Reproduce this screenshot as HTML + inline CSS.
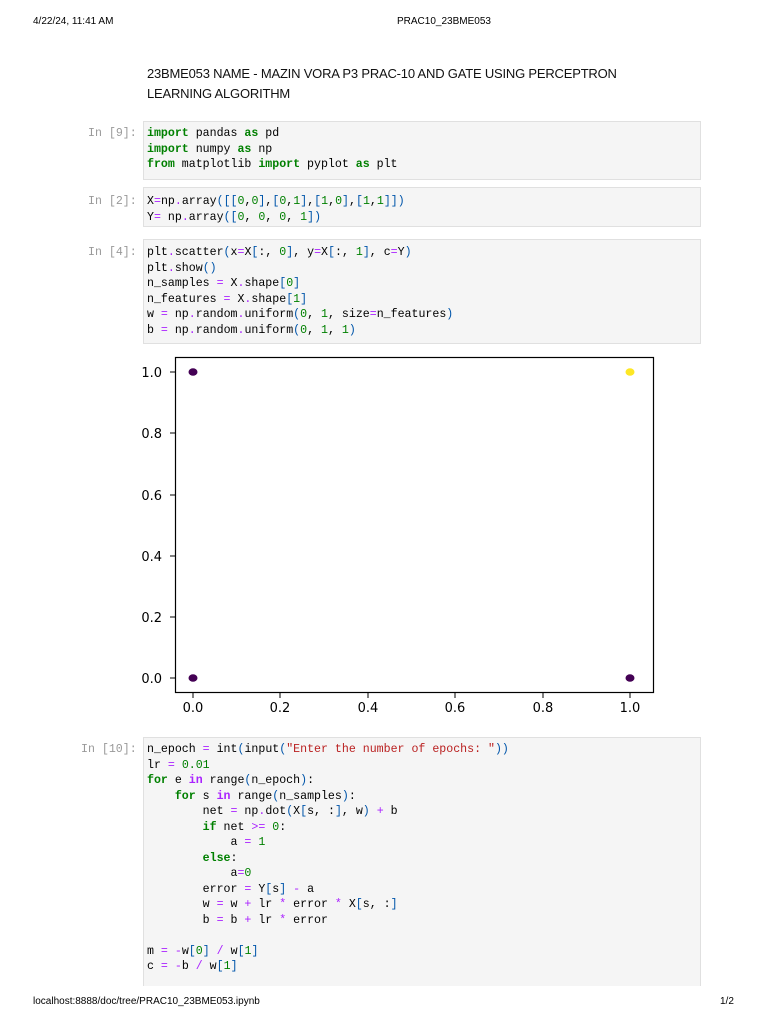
<!DOCTYPE html>
<html style="height:1024px;overflow:hidden"><head><meta charset="utf-8"><style>
html,body{margin:0;width:768px;height:1024px;overflow:hidden;}
body{background:#fff;position:relative;font-family:"Liberation Sans",sans-serif;}
.abs{position:absolute;white-space:pre;}
.hdr{font-size:10px;color:#000;}
.h{font-size:13px;color:#111;letter-spacing:-0.2px;left:147px;}
.box{position:absolute;left:143px;width:556px;background:#f5f5f5;border:1px solid #e0e0e0;}
.code{position:absolute;left:147px;font-family:"Liberation Mono",monospace;font-size:11.6px;line-height:15.5px;white-space:pre;color:#000;}
.p{position:absolute;font-family:"Liberation Mono",monospace;font-size:11.6px;color:#999;white-space:pre;}
.k{color:#008000;font-weight:bold}.o{color:#aa22ff}.n{color:#008000}.b{color:#0055aa}.s{color:#ba2121}
</style></head><body>
<div class="abs hdr" style="left:33px;top:16px">4/22/24, 11:41 AM</div>
<div class="abs hdr" style="left:397px;top:16px">PRAC10_23BME053</div>
<div class="abs h" style="top:66px">23BME053 NAME - MAZIN VORA P3 PRAC-10 AND GATE USING PERCEPTRON</div>
<div class="abs h" style="top:86px">LEARNING ALGORITHM</div>

<div class="box" style="top:121px;height:57px"></div>
<div class="p" style="left:88px;top:127px">In [9]:</div>
<div class="code" style="top:126px"><span class="k">import</span> pandas <span class="k">as</span> pd
<span class="k">import</span> numpy <span class="k">as</span> np
<span class="k">from</span> matplotlib <span class="k">import</span> pyplot <span class="k">as</span> plt</div>

<div class="box" style="top:187px;height:38px"></div>
<div class="p" style="left:88px;top:195px">In [2]:</div>
<div class="code" style="top:194px">X<span class="o">=</span>np<span class="o">.</span>array<span class="b">([[</span><span class="n">0</span>,<span class="n">0</span><span class="b">]</span>,<span class="b">[</span><span class="n">0</span>,<span class="n">1</span><span class="b">]</span>,<span class="b">[</span><span class="n">1</span>,<span class="n">0</span><span class="b">]</span>,<span class="b">[</span><span class="n">1</span>,<span class="n">1</span><span class="b">]])</span>
Y<span class="o">=</span> np<span class="o">.</span>array<span class="b">([</span><span class="n">0</span>, <span class="n">0</span>, <span class="n">0</span>, <span class="n">1</span><span class="b">])</span></div>

<div class="box" style="top:239px;height:103px"></div>
<div class="p" style="left:88px;top:246px">In [4]:</div>
<div class="code" style="top:245px">plt<span class="o">.</span>scatter<span class="b">(</span>x<span class="o">=</span>X<span class="b">[</span>:, <span class="n">0</span><span class="b">]</span>, y<span class="o">=</span>X<span class="b">[</span>:, <span class="n">1</span><span class="b">]</span>, c<span class="o">=</span>Y<span class="b">)</span>
plt<span class="o">.</span>show<span class="b">()</span>
n_samples <span class="o">=</span> X<span class="o">.</span>shape<span class="b">[</span><span class="n">0</span><span class="b">]</span>
n_features <span class="o">=</span> X<span class="o">.</span>shape<span class="b">[</span><span class="n">1</span><span class="b">]</span>
w <span class="o">=</span> np<span class="o">.</span>random<span class="o">.</span>uniform<span class="b">(</span><span class="n">0</span>, <span class="n">1</span>, size<span class="o">=</span>n_features<span class="b">)</span>
b <span class="o">=</span> np<span class="o">.</span>random<span class="o">.</span>uniform<span class="b">(</span><span class="n">0</span>, <span class="n">1</span>, <span class="n">1</span><span class="b">)</span></div>

<svg class="abs" style="left:0;top:0" width="768" height="1024">
<rect x="175.5" y="357.5" width="478" height="335" fill="none" stroke="#000" stroke-width="1.2"/>
<g stroke="#000" stroke-width="1">
<line x1="170" y1="372" x2="175" y2="372"/><line x1="170" y1="433" x2="175" y2="433"/><line x1="170" y1="495" x2="175" y2="495"/><line x1="170" y1="556" x2="175" y2="556"/><line x1="170" y1="617" x2="175" y2="617"/><line x1="170" y1="678" x2="175" y2="678"/>
<line x1="193" y1="693" x2="193" y2="698"/><line x1="280" y1="693" x2="280" y2="698"/><line x1="368" y1="693" x2="368" y2="698"/><line x1="455" y1="693" x2="455" y2="698"/><line x1="543" y1="693" x2="543" y2="698"/><line x1="630" y1="693" x2="630" y2="698"/>
</g>
<g font-family="DejaVu Sans,sans-serif" font-size="13" fill="#000" text-anchor="end">
<text x="162" y="377">1.0</text><text x="162" y="438">0.8</text><text x="162" y="500">0.6</text><text x="162" y="561">0.4</text><text x="162" y="622">0.2</text><text x="162" y="683">0.0</text>
</g>
<g font-family="DejaVu Sans,sans-serif" font-size="13" fill="#000" text-anchor="middle">
<text x="193" y="712">0.0</text><text x="280" y="712">0.2</text><text x="368" y="712">0.4</text><text x="455" y="712">0.6</text><text x="543" y="712">0.8</text><text x="630" y="712">1.0</text>
</g>
<ellipse cx="193" cy="372" rx="4.5" ry="3.8" fill="#440154"/>
<ellipse cx="630" cy="372" rx="4.5" ry="3.8" fill="#fde725"/>
<ellipse cx="193" cy="678" rx="4.5" ry="3.8" fill="#440154"/>
<ellipse cx="630" cy="678" rx="4.5" ry="3.8" fill="#440154"/>
</svg>

<div class="box" style="top:737px;height:260px"></div>
<div class="p" style="left:81px;top:743px">In [10]:</div>
<div class="code" style="top:742px">n_epoch <span class="o">=</span> int<span class="b">(</span>input<span class="b">(</span><span class="s">"Enter the number of epochs: "</span><span class="b">))</span>
lr <span class="o">=</span> <span class="n">0.01</span>
<span class="k">for</span> e <span class="o" style="font-weight:bold">in</span> range<span class="b">(</span>n_epoch<span class="b">)</span>:
    <span class="k">for</span> s <span class="o" style="font-weight:bold">in</span> range<span class="b">(</span>n_samples<span class="b">)</span>:
        net <span class="o">=</span> np<span class="o">.</span>dot<span class="b">(</span>X<span class="b">[</span>s, :<span class="b">]</span>, w<span class="b">)</span> <span class="o">+</span> b
        <span class="k">if</span> net <span class="o">&gt;=</span> <span class="n">0</span>:
            a <span class="o">=</span> <span class="n">1</span>
        <span class="k">else</span>:
            a<span class="o">=</span><span class="n">0</span>
        error <span class="o">=</span> Y<span class="b">[</span>s<span class="b">]</span> <span class="o">-</span> a
        w <span class="o">=</span> w <span class="o">+</span> lr <span class="o">*</span> error <span class="o">*</span> X<span class="b">[</span>s, :<span class="b">]</span>
        b <span class="o">=</span> b <span class="o">+</span> lr <span class="o">*</span> error

m <span class="o">=</span> <span class="o">-</span>w<span class="b">[</span><span class="n">0</span><span class="b">]</span> <span class="o">/</span> w<span class="b">[</span><span class="n">1</span><span class="b">]</span>
c <span class="o">=</span> <span class="o">-</span>b <span class="o">/</span> w<span class="b">[</span><span class="n">1</span><span class="b">]</span></div>

<div class="abs" style="left:0;top:986px;width:768px;height:38px;background:#fff"></div>
<div class="abs hdr" style="left:33px;top:996px">localhost:8888/doc/tree/PRAC10_23BME053.ipynb</div>
<div class="abs hdr" style="left:720px;top:996px">1/2</div>
</body></html>
